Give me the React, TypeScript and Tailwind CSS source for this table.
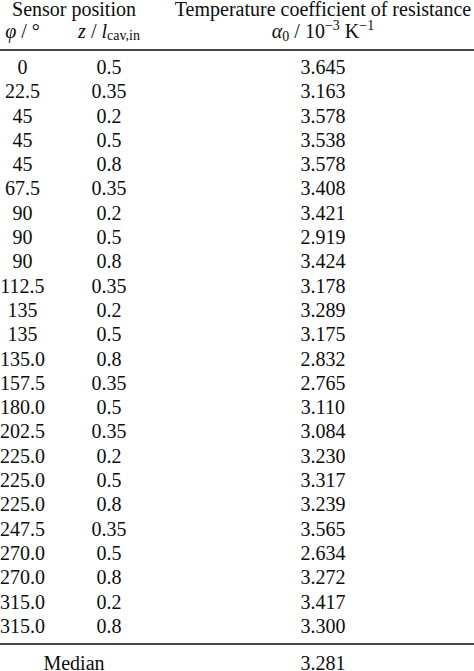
import * as React from "react"

type Row = [string, string, string]

const ROWS: Row[] = [
  ["0", "0.5", "3.645"],
  ["22.5", "0.35", "3.163"],
  ["45", "0.2", "3.578"],
  ["45", "0.5", "3.538"],
  ["45", "0.8", "3.578"],
  ["67.5", "0.35", "3.408"],
  ["90", "0.2", "3.421"],
  ["90", "0.5", "2.919"],
  ["90", "0.8", "3.424"],
  ["112.5", "0.35", "3.178"],
  ["135", "0.2", "3.289"],
  ["135", "0.5", "3.175"],
  ["135.0", "0.8", "2.832"],
  ["157.5", "0.35", "2.765"],
  ["180.0", "0.5", "3.110"],
  ["202.5", "0.35", "3.084"],
  ["225.0", "0.2", "3.230"],
  ["225.0", "0.5", "3.317"],
  ["225.0", "0.8", "3.239"],
  ["247.5", "0.35", "3.565"],
  ["270.0", "0.5", "2.634"],
  ["270.0", "0.8", "3.272"],
  ["315.0", "0.2", "3.417"],
  ["315.0", "0.8", "3.300"],
]

const grid = "grid grid-cols-[45px_78px_300px] gap-x-[25px] text-center whitespace-nowrap"

export default function App() {
  return (
    <div
      className="w-[474px] h-[671px] overflow-hidden bg-white text-[#0d0d0d] text-[20px]"
      style={{ fontFamily: '"Liberation Serif", "Times New Roman", serif' }}
    >
      {/* header */}
      <div className={`${grid} -mt-[2px] leading-[22px]`}>
        <div className="col-span-2">Sensor position</div>
        <div>Temperature coefficient of resistance</div>
        <div>
          <i>φ</i>
          <span className="mx-[5px]">/</span>°
        </div>
        <div>
          <i>z</i>
          <span className="mx-[5px]">/</span>
          <i>l</i>
          <sub className="text-[14px] relative top-[2px] align-baseline">cav,in</sub>
        </div>
        <div>
          <i>α</i>
          <sub className="text-[14px] align-baseline relative top-[3px]">0</sub>
          <span className="mx-[5px]">/</span>10
          <sup className="text-[14px] align-baseline relative -top-[8px]">−3</sup>
          <span className="ml-[5px]">K</span>
          <sup className="text-[14px] align-baseline relative -top-[8px]">−1</sup>
        </div>
      </div>

      <div className="mt-[7px] h-[2px] bg-[#474747]" />

      {/* body */}
      <div className={`${grid} pt-[4px] leading-[24.3px]`}>
        {ROWS.map((r, i) => (
          <React.Fragment key={i}>
            <div>{r[0]}</div>
            <div>{r[1]}</div>
            <div>{r[2]}</div>
          </React.Fragment>
        ))}
      </div>

      <div className="mt-[5px] h-[2px] bg-[#474747]" />

      <div className={`${grid} mt-[6px] leading-[24.3px]`}>
        <div className="col-span-2">Median</div>
        <div>3.281</div>
      </div>
    </div>
  )
}
